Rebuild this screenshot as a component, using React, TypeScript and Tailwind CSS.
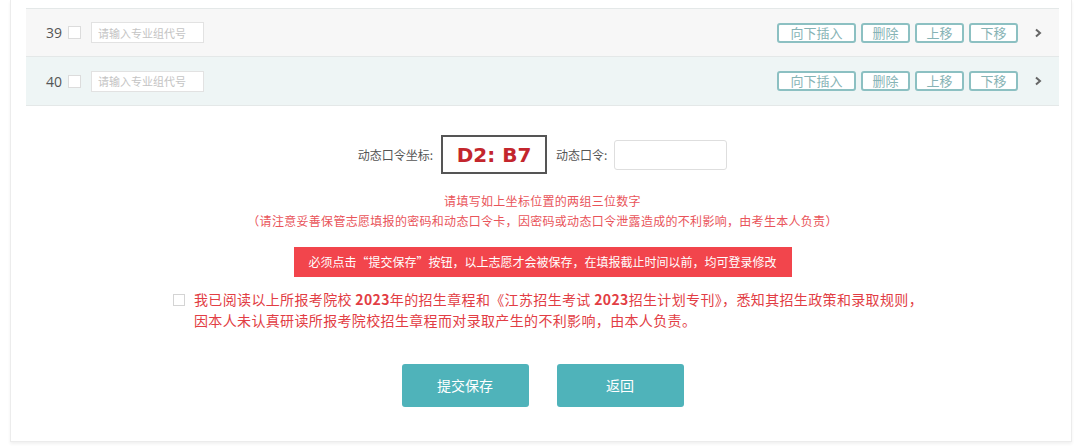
import React from 'react';

const cjk = { fontFamily: '"Noto Sans CJK SC", "Noto Sans", sans-serif' };

function Row({ num, tinted }: { num: number; tinted?: boolean }) {
  return (
    <div
      className={`flex h-[49px] items-center border-b border-[#e4e8e8] pl-[20px] pr-[17px] ${
        tinted ? 'bg-[#eef5f5]' : 'bg-[#f7f7f7] border-t'
      }`}
    >
      <span className="w-[16px] text-[14px] text-[#555]" style={{ fontFamily: '"Open Sans", sans-serif' }}>
        {num}
      </span>
      <span className="ml-[6px] h-[13px] w-[13px] border border-[#dcdcdc] bg-white" />
      <input
        className="ml-[10px] h-[21px] w-[113px] border border-[#e2e2e2] bg-white px-[6px] text-[11px] text-[#555] outline-none placeholder:text-[#c4c4c4]"
        placeholder="请输入专业组代号"
      />
      <div className="ml-auto flex items-center gap-[5px]">
        {['向下插入', '删除', '上移', '下移'].map((t, i) => (
          <button
            key={t}
            className={`h-[20px] rounded-[3px] border-2 border-[#8cc0c2] bg-white text-[13px] leading-[16px] text-[#86b3b5] ${
              i === 0 ? 'w-[79px]' : 'w-[49px]'
            }`}
          >
            {t}
          </button>
        ))}
      </div>
      <svg className="ml-[16px]" width="8" height="10" viewBox="0 0 8 10">
        <path d="M2 1.5 L6 5 L2 8.5" fill="none" stroke="#666" strokeWidth="2" />
      </svg>
    </div>
  );
}

export default function App() {
  return (
    <div className="min-h-screen bg-white" style={cjk}>
      <div className="ml-[10px] w-[1062px] border border-t-0 border-[#ececec] pl-[15px] pr-[12px] pt-[8px] pb-[34px] shadow-[0_2px_3px_rgba(0,0,0,0.06)]">
        <Row num={39} />
        <Row num={40} tinted />

        <div className="mt-[29px] flex items-center justify-center">
          <span className="text-[12px] text-[#555]">动态口令坐标:</span>
          <div className="ml-[8px] flex h-[39px] w-[106px] items-center justify-center border-2 border-[#555]">
            <span
              className="text-[20px] font-bold text-[#c3262d]"
              style={{ fontFamily: '"DejaVu Sans", sans-serif' }}
            >
              D2: B7
            </span>
          </div>
          <span className="ml-[9px] text-[12px] text-[#555]">动态口令:</span>
          <input className="ml-[7px] h-[30px] w-[113px] rounded-[3px] border border-[#dedede] bg-white outline-none" />
        </div>

        <div className="mt-[17px] text-center text-[12px] leading-[20px] tracking-[0.3px] text-[#e9545a]">
          <p>请填写如上坐标位置的两组三位数字</p>
          <p>（请注意妥善保管志愿填报的密码和动态口令卡，因密码或动态口令泄露造成的不利影响，由考生本人负责）</p>
        </div>

        <div className="mt-[16px] flex justify-center">
          <div className="flex h-[30px] w-[498px] items-center justify-center bg-[#f2454c] text-[12px] text-white">
            必须点击“提交保存”按钮，以上志愿才会被保存，在填报截止时间以前，均可登录修改
          </div>
        </div>

        <div className="mt-[12px] flex justify-center pl-[11px]">
          <div className="flex items-start">
            <span className="mt-[5px] h-[12px] w-[12px] border border-[#d4d4d4] bg-white" />
            <div className="ml-[9px] whitespace-nowrap text-[14px] leading-[21px] tracking-[0.35px] text-[#e23d44]">
              <p>
                我已阅读以上所报考院校 <b>2023</b>年的招生章程和《江苏招生考试 <b>2023</b>
                招生计划专刊》，悉知其招生政策和录取规则，
              </p>
              <p>因本人未认真研读所报考院校招生章程而对录取产生的不利影响，由本人负责。</p>
            </div>
          </div>
        </div>

        <div className="mt-[33px] flex justify-center gap-[28px]">
          <button className="h-[43px] w-[127px] rounded-[3px] bg-[#4fb3ba] text-[14px] text-white">提交保存</button>
          <button className="h-[43px] w-[127px] rounded-[3px] bg-[#4fb3ba] text-[14px] text-white">返回</button>
        </div>
      </div>
    </div>
  );
}
